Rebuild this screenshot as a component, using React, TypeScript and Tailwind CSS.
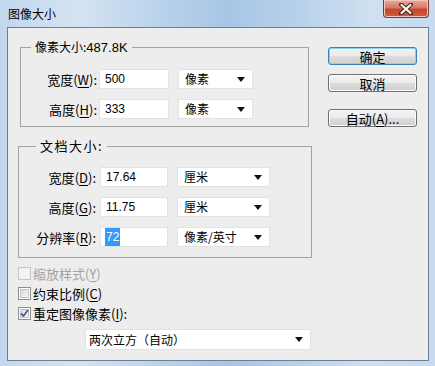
import React from "react";

const F = "font-['Noto_Sans_CJK_SC','Microsoft_YaHei',sans-serif]";
const N = "font-['Liberation_Sans','Noto_Sans_CJK_SC',sans-serif]";

function U({ c }: { c: string }) {
  return <span className="underline underline-offset-[2px] decoration-[1px]">{c}</span>;
}

function Arrow() {
  return (
    <svg width="8" height="5" viewBox="0 0 8 5" className="shrink-0">
      <path d="M0 0 L8 0 L4 5 Z" fill="#111" />
    </svg>
  );
}

function Select({ w, text }: { w: string; text: string }) {
  return (
    <div className={`${w} h-[20px] bg-white border border-[#e2e2e2] flex items-center justify-between pl-[6px] pr-[7px] text-[12px] leading-none text-black`}>
      <span>{text}</span>
      <Arrow />
    </div>
  );
}

function Input({ w, value, selected }: { w: string; value: string; selected?: boolean }) {
  return (
    <div className={`${w} h-[20px] bg-white border border-[#e2e2e2] flex items-center pl-[4px] text-[12px] leading-none ${N}`}>
      {selected ? (
        <span className="bg-[#3399ff] text-white px-[1px] py-[3px]">{value}</span>
      ) : (
        <span className="px-[1px]">{value}</span>
      )}
    </div>
  );
}

function Row({
  labelW,
  gap,
  label,
  mn,
  inputW,
  value,
  selW,
  sel,
  selected,
}: {
  labelW: string;
  gap: string;
  label: string;
  mn: string;
  inputW: string;
  value: string;
  selW: string;
  sel: string;
  selected?: boolean;
}) {
  return (
    <div className="flex items-center h-[20px]">
      <div className={`${labelW} text-right text-[13px] leading-none text-black whitespace-nowrap`}>
        {label}(<U c={mn} />):
      </div>
      <div className={gap} />
      <Input w={inputW} value={value} selected={selected} />
      <div className="w-[9px]" />
      <Select w={selW} text={sel} />
    </div>
  );
}

function Button({ children, def }: { children: React.ReactNode; def?: boolean }) {
  return (
    <div
      className={`w-[89px] h-[18px] rounded-[3px] border flex items-center justify-center text-[13px] leading-none text-black bg-[linear-gradient(to_bottom,#f3f3f3_0%,#ebebeb_50%,#dddddd_51%,#cfcfcf_100%)] ${
        def
          ? "border-[#3c7fb1] shadow-[inset_0_0_0_1px_#8fd0ee]"
          : "border-[#707070] shadow-[inset_0_0_0_1px_#fcfcfc]"
      }`}
    >
      {children}
    </div>
  );
}

function Check({ checked, disabled }: { checked?: boolean; disabled?: boolean }) {
  return (
    <div
      className={`w-[13px] h-[13px] border ${
        disabled ? "border-[#c8c8c8] bg-[#f2f2f2]" : "border-[#8e8f8f] bg-white"
      } flex items-center justify-center shrink-0`}
    >
      <div
        className={`w-[9px] h-[9px] flex items-center justify-center ${
          disabled
            ? "bg-[#f4f4f4]"
            : "bg-[linear-gradient(135deg,#d9d9d9,#f7f7f7)] border border-[#c4c4c4]"
        }`}
      >
        {checked && (
          <svg width="9" height="9" viewBox="0 0 9 9" className="-m-[1px]">
            <path d="M1 4.5 L3.5 7 L8 1" stroke="#4a5f97" strokeWidth="1.8" fill="none" />
          </svg>
        )}
      </div>
    </div>
  );
}

export default function App() {
  return (
    <div
      className={`w-[435px] h-[366px] flex flex-col ${F} bg-[linear-gradient(to_right,#c2d7ed_0%,#d5e3f2_18%,#bcd4ec_35%,#a7c6e5_52%,#b9d2eb_70%,#cfe0f1_85%,#c6dbef_100%)]`}
    >
      {/* title bar */}
      <div className="h-[27px] flex justify-between items-start shrink-0">
        <div className="pl-[8px] pt-[7px] text-[12px] leading-[14px] text-black">图像大小</div>
        <div className="mr-[6px] w-[46px] h-[18px] rounded-b-[4px] border border-t-0 border-[#7a3a30] bg-[linear-gradient(to_bottom,#e7aa9d_0%,#d97a68_45%,#c4472f_55%,#cf5b40_100%)] shadow-[inset_0_0_0_1px_#f1c6bc] flex items-center justify-center">
          <svg width="16" height="12" viewBox="0 0 16 12">
            <path d="M3 1.5 L13 10.5 M13 1.5 L3 10.5" stroke="#4a2018" strokeWidth="4" strokeLinecap="round" />
            <path d="M3.5 2 L12.5 10 M12.5 2 L3.5 10" stroke="#ffffff" strokeWidth="2.2" strokeLinecap="round" />
          </svg>
        </div>
      </div>

      {/* client */}
      <div className="ml-[7px] mr-[6px] h-[334px] border border-[#6f7f90] bg-[#ededed] flex shrink-0">
        {/* left column */}
        <div className="pl-[10px] w-[304px] flex flex-col">
          <fieldset className="ml-[2px] w-[289px] mt-[11px] border border-[#a3a3a3] pt-[13px] pb-[7px] flex flex-col gap-[10px]">
            <legend className="ml-[10px] px-[4px] text-[12px] leading-[16px] text-black">
              像素大小:<span className={`${N} text-[13px]`}>487.8K</span>
            </legend>
            <Row labelW="w-[76px]" gap="w-[2px]" label="宽度" mn="W" inputW="w-[70px]" value="500" selW="w-[75px]" sel="像素" />
            <Row labelW="w-[76px]" gap="w-[2px]" label="高度" mn="H" inputW="w-[70px]" value="333" selW="w-[75px]" sel="像素" />
          </fieldset>

          <fieldset className="w-[294px] mt-[11px] border border-[#a3a3a3] pt-[13px] pb-[10px] flex flex-col gap-[10px]">
            <legend className="ml-[17px] px-[4px] text-[13px] leading-[16px] tracking-[1.5px] text-black">文档大小:</legend>
            <Row labelW="w-[77px]" gap="w-[4px]" label="宽度" mn="D" inputW="w-[68px]" value="17.64" selW="w-[93px]" sel="厘米" />
            <Row labelW="w-[77px]" gap="w-[4px]" label="高度" mn="G" inputW="w-[68px]" value="11.75" selW="w-[93px]" sel="厘米" />
            <Row labelW="w-[77px]" gap="w-[4px]" label="分辨率" mn="R" inputW="w-[68px]" value="72" selW="w-[93px]" sel="像素/英寸" selected />
          </fieldset>

          <div className="mt-[5px] flex flex-col">
            <div className="h-[20px] flex items-center gap-[2px] text-[13px] leading-none text-[#a3a3a3]">
              <Check disabled />
              <span>
                缩放样式(<U c="Y" />)
              </span>
            </div>
            <div className="h-[20px] flex items-center gap-[2px] text-[13px] leading-none text-black">
              <Check />
              <span>
                约束比例(<U c="C" />)
              </span>
            </div>
            <div className="h-[20px] flex items-center gap-[2px] text-[13px] leading-none text-black">
              <Check checked />
              <span>
                重定图像像素(<U c="I" />):
              </span>
            </div>
          </div>

          <div className="mt-[6px] ml-[67px] w-[226px] h-[21px] bg-white border border-[#e2e2e2] flex items-center justify-between pl-[3px] pr-[7px] text-[12px] leading-none text-black">
            <span>两次立方（自动）</span>
            <Arrow />
          </div>
        </div>

        {/* right column */}
        <div className="ml-[16px] mt-[19px] flex flex-col">
          <Button def>确定</Button>
          <div className="h-[9px]" />
          <Button>取消</Button>
          <div className="h-[17px]" />
          <Button>
            自动(<U c="A" />)...
          </Button>
        </div>
      </div>
    </div>
  );
}
